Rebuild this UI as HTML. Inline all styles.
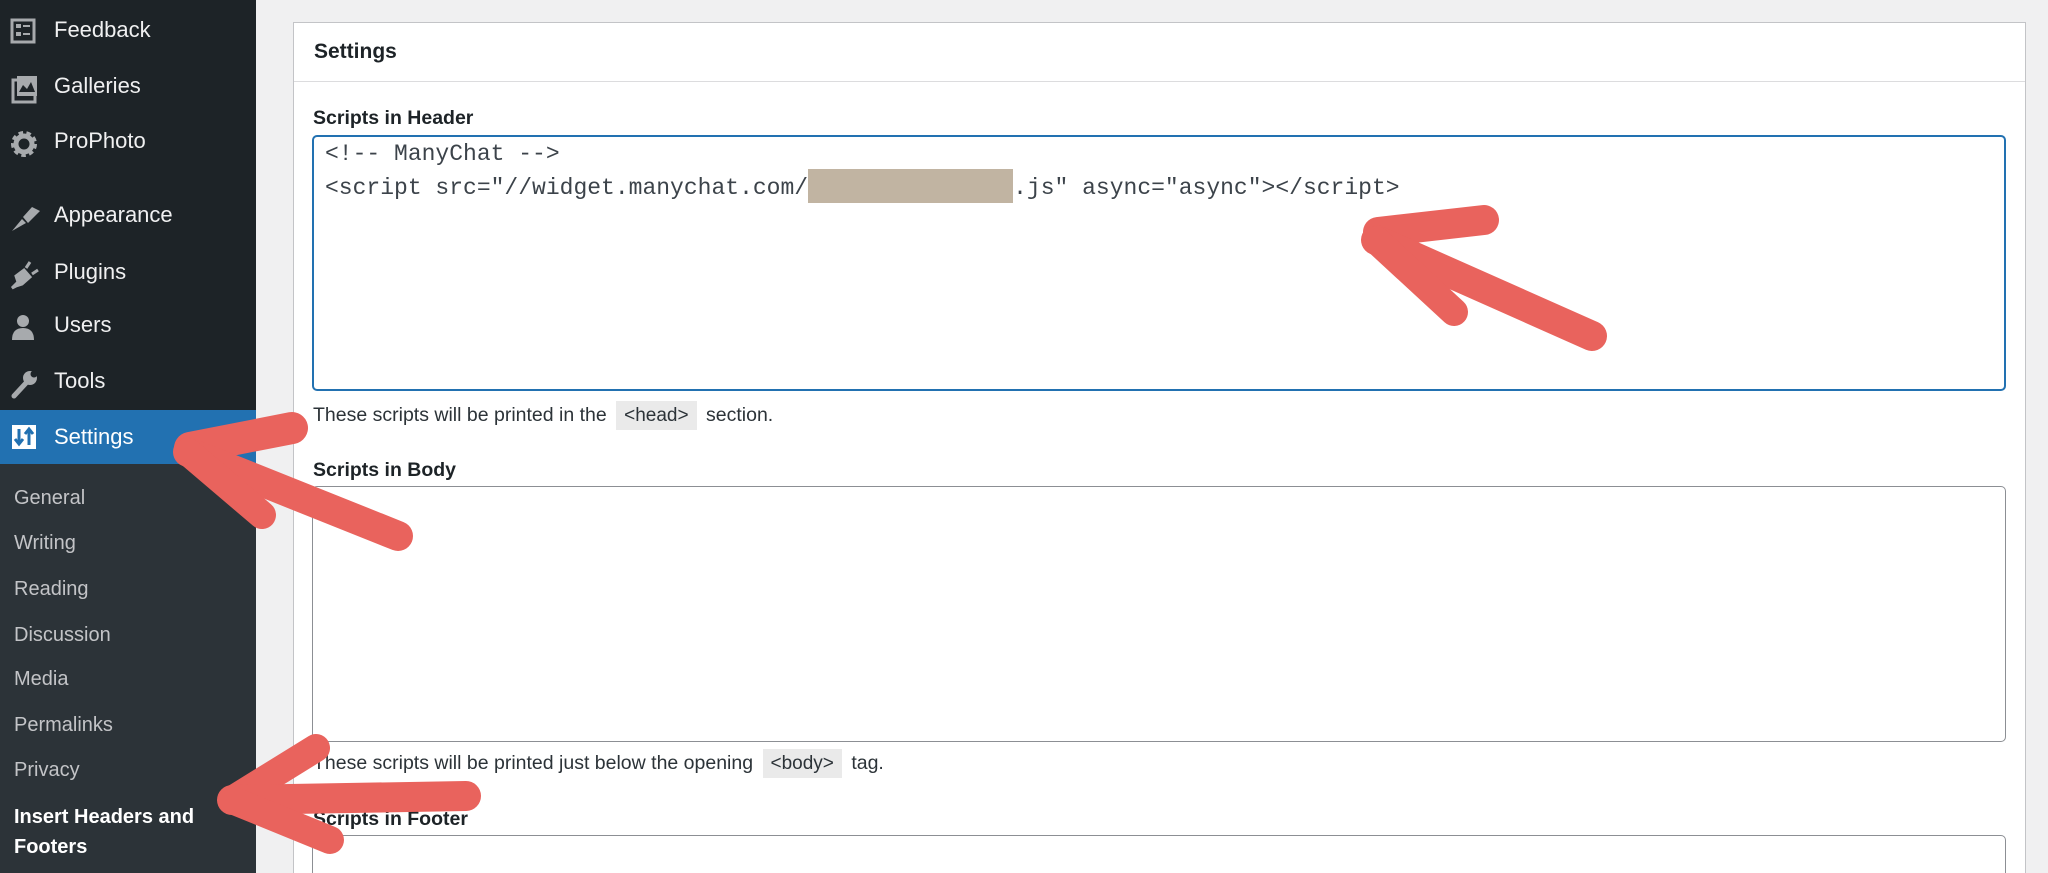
<!DOCTYPE html>
<html style="overflow:hidden;width:2048px;height:873px"><head><meta charset="utf-8"><style>
*{margin:0;padding:0;box-sizing:border-box}
body{width:2048px;height:873px;overflow:hidden;background:#f0f0f1;font-family:"Liberation Sans",sans-serif;position:relative}
#side{position:absolute;left:0;top:0;width:256px;height:873px;background:#1d2327}
.mi{position:absolute;left:0;width:256px;height:40px;line-height:40px;color:#f0f0f1;font-size:22px}
.mi span{position:absolute;left:54px}
.mi svg{position:absolute;left:10px;top:8px}
#sub{position:absolute;left:0;top:464px;width:256px;height:409px;background:#2c3338}
.si{position:absolute;left:14px;color:#c3c4c7;font-size:20px;line-height:26px}
#card{position:absolute;left:293px;top:22px;width:1733px;height:851px;background:#fff;border:1px solid #c3c4c7;border-bottom:none}
#hdr{position:absolute;left:0;top:0;right:0;height:59px;border-bottom:1px solid #dcdcde}
.t{position:absolute;color:#1d2327}
.lbl{font-weight:bold;font-size:19.5px}
.desc{font-size:19.5px;color:#2c3338}
code{background:#eaeaea;padding:4px 8px;font-family:"Liberation Sans",sans-serif;font-size:19px;margin:0 4px}
.ta{position:absolute;left:312px;width:1694px;background:#fff;border-radius:5px}
.mono{position:absolute;left:325px;font-family:"Liberation Mono",monospace;font-size:23px;color:#3c434a;white-space:pre;line-height:30px}
.blob{display:inline-block;width:205px;height:34px;background:#c1b4a2;vertical-align:-9px}
</style></head><body>
<div id="side">
 <div class="mi" style="top:10px"><svg width="28" height="26" viewBox="0 0 28 26"><rect x="2" y="2" width="22" height="22" fill="none" stroke="#a7aaad" stroke-width="3"/><rect x="6" y="6" width="5" height="4" fill="#a7aaad"/><rect x="6" y="14" width="5" height="4" fill="#a7aaad"/><rect x="13" y="7" width="7" height="2" fill="#a7aaad"/><rect x="13" y="15" width="7" height="2" fill="#a7aaad"/></svg><span>Feedback</span></div>
 <div class="mi" style="top:66px"><svg width="30" height="30" viewBox="0 0 30 30"><rect x="3" y="6" width="22" height="22" fill="none" stroke="#a7aaad" stroke-width="3"/><rect x="7" y="2" width="20" height="20" fill="#a7aaad"/><path d="M9 18 L13 11 L17 15 L21 8 L25 18Z" fill="#1d2327"/></svg><span>Galleries</span></div>
 <div class="mi" style="top:121px"><svg width="30" height="30" viewBox="0 0 30 30"><circle cx="14" cy="15" r="10" fill="none" stroke="#a7aaad" stroke-width="6" stroke-dasharray="4 3"/><circle cx="14" cy="15" r="8" fill="none" stroke="#a7aaad" stroke-width="5"/></svg><span>ProPhoto</span></div>
 <div class="mi" style="top:195px"><svg width="30" height="30" viewBox="0 0 30 30"><path d="M2 28 L12 16 L16 20Z M13 14 L22 4 L30 8 L18 20Z" fill="#a7aaad"/></svg><span>Appearance</span></div>
 <div class="mi" style="top:252px"><svg width="30" height="30" viewBox="0 0 30 30"><path d="M2 28 L8 22 L6 16 L14 10 L20 17 L12 24 L6 26Z M16 8 L20 2 M22 14 L28 10" stroke="#a7aaad" stroke-width="3" fill="#a7aaad"/></svg><span>Plugins</span></div>
 <div class="mi" style="top:305px"><svg width="30" height="30" viewBox="0 0 30 30"><circle cx="13" cy="8" r="6" fill="#a7aaad"/><path d="M2 27 Q2 15 13 15 Q24 15 24 27Z" fill="#a7aaad"/></svg><span>Users</span></div>
 <div class="mi" style="top:361px"><svg width="30" height="30" viewBox="0 0 30 30"><path d="M4 27 L16 14" stroke="#a7aaad" stroke-width="5" stroke-linecap="round"/><circle cx="20" cy="9" r="7" fill="#a7aaad"/><circle cx="24" cy="5" r="3.5" fill="#1d2327"/></svg><span>Tools</span></div>
 <div class="mi" style="top:410px;height:54px;line-height:54px;background:#2271b1;color:#fff"><svg width="28" height="28" viewBox="0 0 28 28" style="top:13px"><rect x="2" y="2" width="24" height="24" fill="#fff"/><path d="M9 6 V20 M5 16 L9 21 L13 16 M19 22 V8 M15 11 L19 6 L23 11" stroke="#2271b1" stroke-width="3" fill="none"/></svg><span>Settings</span></div>
</div>
<div id="sub">
 <div class="si" style="top:21px">General</div>
 <div class="si" style="top:66px">Writing</div>
 <div class="si" style="top:112px">Reading</div>
 <div class="si" style="top:158px">Discussion</div>
 <div class="si" style="top:202px">Media</div>
 <div class="si" style="top:248px">Permalinks</div>
 <div class="si" style="top:293px">Privacy</div>
 <div class="si" style="top:338px;color:#fff;font-weight:bold;line-height:30px">Insert Headers and<br>Footers</div>
</div>
<div id="card"><div id="hdr"></div><div class="t" style="left:20px;top:17px;font-size:21px;font-weight:bold">Settings</div></div>
<div class="t lbl" style="left:313px;top:107px">Scripts in Header</div>
<div class="ta" style="top:135px;height:256px;border:2px solid #2271b1"></div>
<div class="mono" style="top:139px">&lt;!-- ManyChat --&gt;
&lt;script src="//widget.manychat.com/<span class="blob"></span>.js" async="async"&gt;&lt;/script&gt;</div>
<div class="t desc" style="left:313px;top:404px">These scripts will be printed in the <code>&lt;head&gt;</code> section.</div>
<div class="t lbl" style="left:313px;top:459px">Scripts in Body</div>
<div class="ta" style="top:486px;height:256px;border:1px solid #8c8f94"></div>
<div class="t desc" style="left:313px;top:752px">These scripts will be printed just below the opening <code>&lt;body&gt;</code> tag.</div>
<div class="t lbl" style="left:313px;top:808px">Scripts in Footer</div>
<div class="ta" style="top:835px;height:60px;border:1px solid #8c8f94"></div>
<svg style="position:absolute;left:0;top:0" width="2048" height="873" viewBox="0 0 2048 873">
<g stroke="#e9635d" stroke-linecap="round" fill="none">
<path d="M1378 232 L1484 220" stroke-width="30"/>
<path d="M1376 240 L1592 336" stroke-width="30"/>
<path d="M1376 240 L1454 312" stroke-width="28"/>
<path d="M190 448 L292 428" stroke-width="32"/>
<path d="M188 452 L398 536" stroke-width="30"/>
<path d="M188 452 L262 515" stroke-width="28"/>
<path d="M232 800 L316 748" stroke-width="28"/>
<path d="M232 800 L466 796" stroke-width="30"/>
<path d="M232 800 L330 840" stroke-width="28"/>
</g></svg>
</body></html>
